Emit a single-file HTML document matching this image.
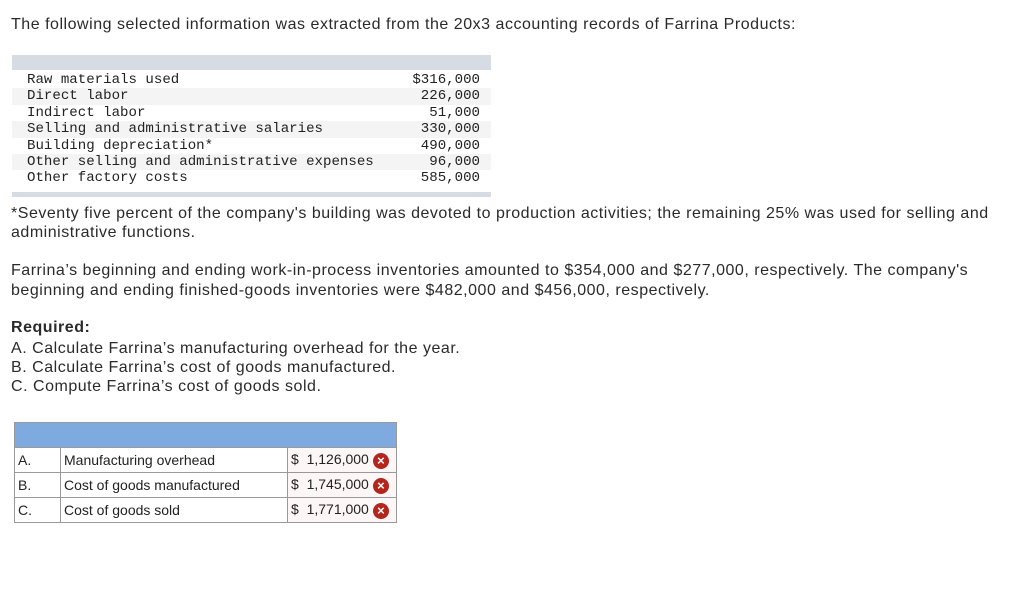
<!DOCTYPE html>
<html><head><style>
body{margin:0;width:1024px;height:613px;background:#fff;font-family:"Liberation Sans",sans-serif;color:#2a2a2a;position:relative;overflow:hidden}
.t{position:absolute;left:11px;font-size:16px;letter-spacing:0.52px;white-space:nowrap}
.bar{position:absolute;left:12px;width:479px;background:#d6dbe4}
.mono{position:absolute;left:12px;top:72px;width:479px;font-family:"Liberation Mono",monospace;font-size:14.1px;color:#222}
.mono div{height:16.4px;line-height:16.4px;padding:0 11px 0 15px;display:flex;justify-content:space-between}
.mono div:nth-child(even){background:#f4f4f4}
table{position:absolute;left:14px;top:422px;border-collapse:collapse;font-size:14px;color:#222}
td{border:1px solid #999;height:24px;padding:0 3px;}
.x{display:inline-block;width:16px;height:16px;border-radius:50%;background:#b3261e;color:#fff;font-size:13px;line-height:16px;text-align:center;font-weight:bold;vertical-align:middle;margin-left:4px}
</style></head><body>
<div class="t" style="top:16px">The following selected information was extracted from the 20x3 accounting records of Farrina Products:</div>
<div class="bar" style="top:55px;height:15px"></div>
<div class="mono">
<div><span>Raw materials used</span><span>$316,000</span></div>
<div><span>Direct labor</span><span>226,000</span></div>
<div><span>Indirect labor</span><span>51,000</span></div>
<div><span>Selling and administrative salaries</span><span>330,000</span></div>
<div><span>Building depreciation*</span><span>490,000</span></div>
<div><span>Other selling and administrative expenses</span><span>96,000</span></div>
<div><span>Other factory costs</span><span>585,000</span></div>
</div>
<div class="bar" style="top:192px;height:5px"></div>
<div class="t" style="top:205px">*Seventy five percent of the company's building was devoted to production activities; the remaining 25% was used for selling and</div>
<div class="t" style="top:224px">administrative functions.</div>
<div class="t" style="top:262px">Farrina’s beginning and ending work-in-process inventories amounted to $354,000 and $277,000, respectively. The company's</div>
<div class="t" style="top:282px">beginning and ending finished-goods inventories were $482,000 and $456,000, respectively.</div>
<div class="t" style="top:319px;font-weight:bold">Required:</div>
<div class="t" style="top:340px">A. Calculate Farrina’s manufacturing overhead for the year.</div>
<div class="t" style="top:359px">B. Calculate Farrina’s cost of goods manufactured.</div>
<div class="t" style="top:378px">C. Compute Farrina’s cost of goods sold.</div>
<table>
<tr><td colspan="3" style="background:#7faadf;height:24px"></td></tr>
<tr><td style="width:39px">A.</td><td style="width:220px">Manufacturing overhead</td><td style="width:102px;background:#fcf6f6">$&nbsp; 1,126,000<span class="x">×</span></td></tr>
<tr><td>B.</td><td>Cost of goods manufactured</td><td style="background:#fcf6f6">$&nbsp; 1,745,000<span class="x">×</span></td></tr>
<tr><td>C.</td><td>Cost of goods sold</td><td style="background:#fcf6f6">$&nbsp; 1,771,000<span class="x">×</span></td></tr>
</table>
</body></html>
